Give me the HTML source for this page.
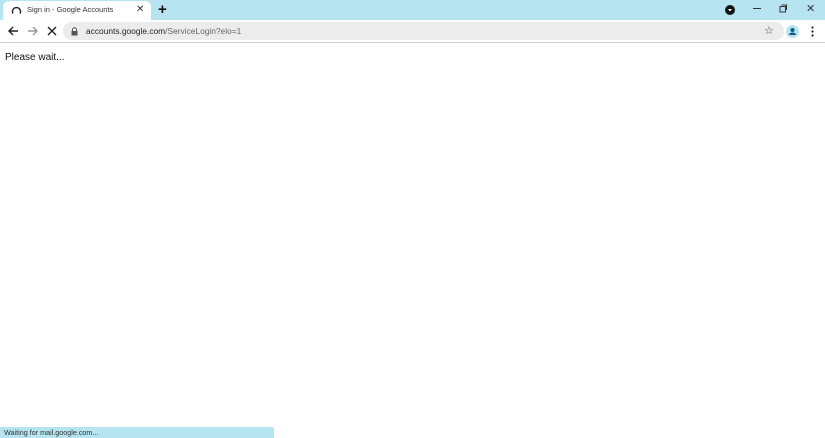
<!DOCTYPE html>
<html><head><style>
body{margin:0;width:825px;height:438px;overflow:hidden;background:#fff;font-family:"Liberation Sans",sans-serif;position:relative}
.top{position:absolute;left:0;top:0;width:825px;height:20px;background:#b6e4f0}
.tab{position:absolute;left:3px;top:1px;width:148px;height:20px;background:#fff;border-radius:6px 6px 0 0}
.abs{position:absolute}
.omni{position:absolute;left:63px;top:22px;width:721px;height:18px;background:#ececec;border-radius:9px}
.sep{position:absolute;left:0;top:42px;width:825px;height:1px;background:#d0d0d0}
.status{position:absolute;left:0;top:427px;width:274px;height:11px;background:#b6e4f0;border-top-right-radius:2px;font-size:7.2px;color:#333;line-height:11px;padding-left:4px;box-sizing:border-box}
</style></head><body>
<div class="top"></div>
<div class="tab"></div>
<svg class="abs" style="left:11px;top:5px" width="11" height="11" viewBox="0 0 11 11"><path d="M2 8.5A4 4 0 1 1 9 8.5" fill="none" stroke="#222" stroke-width="1.4"/></svg>
<div class="abs" style="left:27px;top:5px;font-size:7.5px;color:#333">Sign in - Google Accounts</div>
<div class="abs" style="left:136px;top:4px;font-size:10px;color:#333">✕</div>
<div class="abs" style="left:158px;top:1px;font-size:15px;color:#111;font-weight:bold">+</div>
<svg class="abs" style="left:725px;top:5px" width="10" height="10"><circle cx="5" cy="5" r="5" fill="#111"/><path d="M3 4h4L5 6.5z" fill="#fff"/></svg>
<div class="abs" style="left:753px;top:8px;width:8px;height:1px;background:#333"></div>
<svg class="abs" style="left:779px;top:4px" width="9" height="9"><rect x="1" y="2.5" width="5.5" height="5.5" fill="none" stroke="#333"/><path d="M2.5 1h5v5" fill="none" stroke="#333"/></svg>
<div class="abs" style="left:806px;top:2px;font-size:11px;color:#333">✕</div>
<svg class="abs" style="left:7px;top:25px" width="12" height="12"><path d="M11 6H2M6 2L2 6l4 4" fill="none" stroke="#222" stroke-width="1.4"/></svg>
<svg class="abs" style="left:27px;top:25px" width="12" height="12"><path d="M1 6h9M6 2l4 4-4 4" fill="none" stroke="#999" stroke-width="1.4"/></svg>
<svg class="abs" style="left:46px;top:25px" width="12" height="12"><path d="M2 2l8 8M10 2l-8 8" fill="none" stroke="#222" stroke-width="1.4"/></svg>
<div class="omni"></div>
<svg class="abs" style="left:71px;top:27px" width="7" height="9"><path d="M1.5 4V2.8a2 2 0 0 1 4 0V4" fill="none" stroke="#555"/><rect x="0.5" y="4" width="6" height="4.5" fill="#555"/></svg>
<div class="abs" style="left:86px;top:26px;font-size:8.4px;color:#222">accounts.google.com<span style="color:#666">/ServiceLogin?elo=1</span></div>
<div class="abs" style="left:764px;top:24px;font-size:11px;color:#444">☆</div>
<svg class="abs" style="left:786px;top:25px" width="13" height="13"><circle cx="6.5" cy="6.5" r="6.5" fill="#b6e4f0"/><circle cx="6.5" cy="5" r="2" fill="#0b5a86"/><path d="M3 10a3.5 2.5 0 0 1 7 0z" fill="#0b5a86"/></svg>
<svg class="abs" style="left:811px;top:26px" width="3" height="11"><circle cx="1.5" cy="1.5" r="1.1" fill="#222"/><circle cx="1.5" cy="5.5" r="1.1" fill="#222"/><circle cx="1.5" cy="9.5" r="1.1" fill="#222"/></svg>
<div class="sep"></div>
<div class="abs" style="left:5px;top:52px;font-size:10px;color:#111">Please wait...</div>
<div class="status">Waiting for mail.google.com...</div>
</body></html>
